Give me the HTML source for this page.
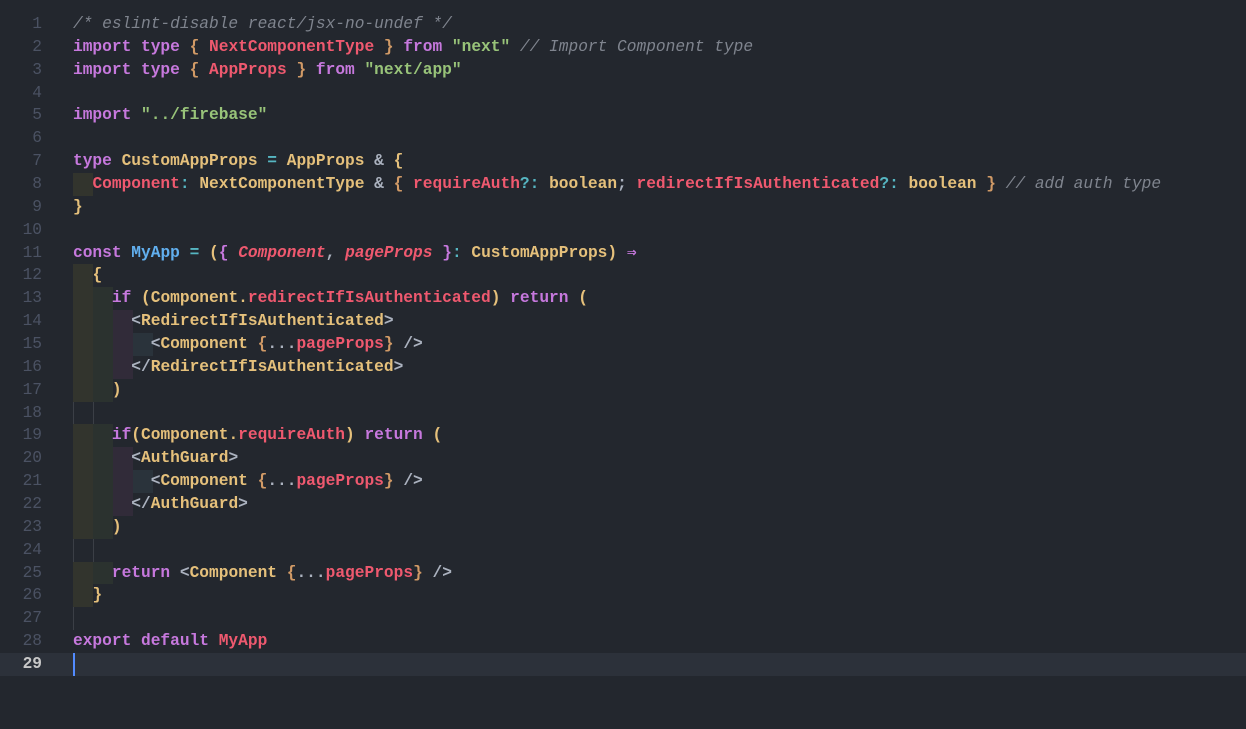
<!DOCTYPE html>
<html><head><meta charset="utf-8"><style>
body{margin:0;width:1246px;height:729px;background:#23272e;overflow:hidden;font-family:"Liberation Mono",monospace;font-size:16.2px;font-weight:bold;}
.wrap{position:absolute;left:0;top:13px;width:1246px}
.row{position:relative;height:22.86px}
.ln{position:absolute;left:0;top:0;width:42px;text-align:right;color:#4b5263;font-weight:normal;line-height:22.86px}
.l{position:absolute;left:73px;top:0;line-height:22.86px;white-space:pre;color:#abb2bf}
.b1,.b2,.b3,.b4{position:absolute;top:0;height:22.86px;width:19.5px}
.b1{left:73px;background:#32342d}.b2{left:93px;background:#2b322f}.b3{left:113px;background:#312b39}.b4{left:133px;background:#2a333b}
.g1,.g2{position:absolute;top:0;width:1px;height:22.86px;background:#3b3f46}.g1{left:73px}.g2{left:93px}
.cur{background:#2c313a}.cur .ln{color:#c8c8c8;font-weight:bold}
.caret{position:absolute;left:73px;top:0;width:2px;height:22.86px;background:#528bff}
.k{color:#c678dd}.t{color:#e5c07b}.r{color:#ef596f}.s{color:#98c379}.c{color:#7f848e;font-style:italic;font-weight:normal}.bl{color:#61afef}.o{color:#56b6c2}.y{color:#e5c07b}.p{color:#d19a66}.i{font-style:italic}.w{color:#abb2bf}
</style></head><body>
<div class="wrap">
<div class="row"><div class="ln">1</div><div class="l"><span class="c">/* eslint-disable react/jsx-no-undef */</span></div></div>
<div class="row"><div class="ln">2</div><div class="l"><span class="k">import type</span> <span class="p">{</span> <span class="r">NextComponentType</span> <span class="p">}</span> <span class="k">from</span> <span class="s">"next"</span> <span class="c">// Import Component type</span></div></div>
<div class="row"><div class="ln">3</div><div class="l"><span class="k">import type</span> <span class="p">{</span> <span class="r">AppProps</span> <span class="p">}</span> <span class="k">from</span> <span class="s">"next/app"</span></div></div>
<div class="row"><div class="ln">4</div></div>
<div class="row"><div class="ln">5</div><div class="l"><span class="k">import</span> <span class="s">"../firebase"</span></div></div>
<div class="row"><div class="ln">6</div></div>
<div class="row"><div class="ln">7</div><div class="l"><span class="k">type</span> <span class="t">CustomAppProps</span> <span class="o">=</span> <span class="t">AppProps</span> <span class="w">&amp;</span> <span class="y">{</span></div></div>
<div class="row"><div class="ln">8</div><div class="b1"></div><div class="l">  <span class="r">Component</span><span class="o">:</span> <span class="t">NextComponentType</span> <span class="w">&amp;</span> <span class="p">{</span> <span class="r">requireAuth</span><span class="o">?:</span> <span class="t">boolean</span><span class="w">;</span> <span class="r">redirectIfIsAuthenticated</span><span class="o">?:</span> <span class="t">boolean</span> <span class="p">}</span> <span class="c">// add auth type</span></div></div>
<div class="row"><div class="ln">9</div><div class="l"><span class="y">}</span></div></div>
<div class="row"><div class="ln">10</div></div>
<div class="row"><div class="ln">11</div><div class="l"><span class="k">const</span> <span class="bl">MyApp</span> <span class="o">=</span> <span class="y">(</span><span class="k">{</span> <span class="r i">Component</span><span class="w">,</span> <span class="r i">pageProps</span> <span class="k">}</span><span class="o">:</span> <span class="t">CustomAppProps</span><span class="y">)</span> <span class="k">⇒</span></div></div>
<div class="row"><div class="ln">12</div><div class="b1"></div><div class="l">  <span class="y">{</span></div></div>
<div class="row"><div class="ln">13</div><div class="b1"></div><div class="b2"></div><div class="l">    <span class="k">if</span> <span class="y">(Component.</span><span class="r">redirectIfIsAuthenticated</span><span class="y">)</span> <span class="k">return</span> <span class="y">(</span></div></div>
<div class="row"><div class="ln">14</div><div class="b1"></div><div class="b2"></div><div class="b3"></div><div class="l">      <span class="w">&lt;</span><span class="t">RedirectIfIsAuthenticated</span><span class="w">&gt;</span></div></div>
<div class="row"><div class="ln">15</div><div class="b1"></div><div class="b2"></div><div class="b3"></div><div class="b4"></div><div class="l">        <span class="w">&lt;</span><span class="t">Component</span> <span class="p">{</span><span class="w">...</span><span class="r">pageProps</span><span class="p">}</span> <span class="w">/&gt;</span></div></div>
<div class="row"><div class="ln">16</div><div class="b1"></div><div class="b2"></div><div class="b3"></div><div class="l">      <span class="w">&lt;/</span><span class="t">RedirectIfIsAuthenticated</span><span class="w">&gt;</span></div></div>
<div class="row"><div class="ln">17</div><div class="b1"></div><div class="b2"></div><div class="l">    <span class="y">)</span></div></div>
<div class="row"><div class="ln">18</div><div class="g1"></div><div class="g2"></div></div>
<div class="row"><div class="ln">19</div><div class="b1"></div><div class="b2"></div><div class="l">    <span class="k">if</span><span class="y">(Component.</span><span class="r">requireAuth</span><span class="y">)</span> <span class="k">return</span> <span class="y">(</span></div></div>
<div class="row"><div class="ln">20</div><div class="b1"></div><div class="b2"></div><div class="b3"></div><div class="l">      <span class="w">&lt;</span><span class="t">AuthGuard</span><span class="w">&gt;</span></div></div>
<div class="row"><div class="ln">21</div><div class="b1"></div><div class="b2"></div><div class="b3"></div><div class="b4"></div><div class="l">        <span class="w">&lt;</span><span class="t">Component</span> <span class="p">{</span><span class="w">...</span><span class="r">pageProps</span><span class="p">}</span> <span class="w">/&gt;</span></div></div>
<div class="row"><div class="ln">22</div><div class="b1"></div><div class="b2"></div><div class="b3"></div><div class="l">      <span class="w">&lt;/</span><span class="t">AuthGuard</span><span class="w">&gt;</span></div></div>
<div class="row"><div class="ln">23</div><div class="b1"></div><div class="b2"></div><div class="l">    <span class="y">)</span></div></div>
<div class="row"><div class="ln">24</div><div class="g1"></div><div class="g2"></div></div>
<div class="row"><div class="ln">25</div><div class="b1"></div><div class="b2"></div><div class="l">    <span class="k">return</span> <span class="w">&lt;</span><span class="t">Component</span> <span class="p">{</span><span class="w">...</span><span class="r">pageProps</span><span class="p">}</span> <span class="w">/&gt;</span></div></div>
<div class="row"><div class="ln">26</div><div class="b1"></div><div class="l">  <span class="y">}</span></div></div>
<div class="row"><div class="ln">27</div><div class="g1"></div></div>
<div class="row"><div class="ln">28</div><div class="l"><span class="k">export default</span> <span class="r">MyApp</span></div></div>
<div class="row cur"><div class="ln">29</div><div class="caret"></div></div>
</div>
</body></html>
